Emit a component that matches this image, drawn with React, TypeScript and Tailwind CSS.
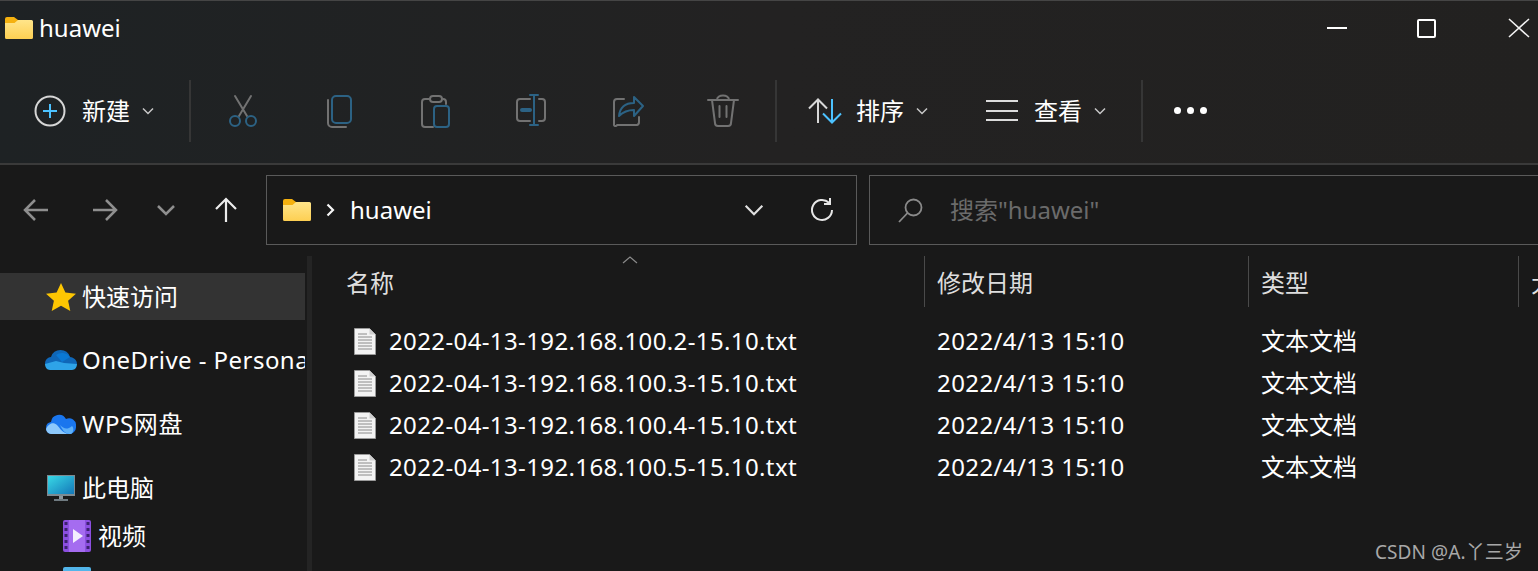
const FONT = "font-['Noto_Sans','Noto_Sans_CJK_SC',sans-serif]";

const FILES = [
  "2022-04-13-192.168.100.2-15.10.txt",
  "2022-04-13-192.168.100.3-15.10.txt",
  "2022-04-13-192.168.100.4-15.10.txt",
  "2022-04-13-192.168.100.5-15.10.txt",
];

// ── Icons ─────────────────────────────────────────────

function FolderIcon() {
  return (
    <svg width="28" height="22" viewBox="0 0 28 22" className="shrink-0">
      <defs>
        <linearGradient id="folderFront" x1="0" y1="0" x2="0" y2="1">
          <stop offset="0" stopColor="#ffe58a" />
          <stop offset="1" stopColor="#fdcf52" />
        </linearGradient>
      </defs>
      <path d="M0 2a2 2 0 0 1 2-2h7l4 3v4H0z" fill="#f5b10f" />
      <path d="M0 6h9.5L13 3h13.5A1.5 1.5 0 0 1 28 4.5V20.500A1.500 1.500 0 0 1 26.500 22H1.500A1.500 1.500 0 0 1 0 20.500z" fill="url(#folderFront)" />
    </svg>
  );
}

function Chevron({ size = 12, color = "#c8c8c8", width = 1.5 }: { size?: number; color?: string; width?: number }) {
  return (
    <svg width={size} height={size} viewBox="0 0 12 12" fill="none" className="shrink-0">
      <path d="M1 3.500 6 8.500l5-5" stroke={color} strokeWidth={width} />
    </svg>
  );
}

function ToolIcon({ children, dx = 0 }: { children: React.ReactNode; dx?: number }) {
  return (
    <div className="flex w-[96px] items-center justify-center">
      <svg width="32" height="34" viewBox={`${-dx} 0 32 34`} fill="none" strokeWidth="2" strokeLinecap="round" strokeLinejoin="round" className="overflow-visible">
        {children}
      </svg>
    </div>
  );
}

const GREY = "#727272";
const BLUE = "#2c6284";

function Separator() {
  return <div className="mx-[5px] h-[62px] w-[2px] shrink-0 bg-[#363636]" />;
}

function FileIcon() {
  return (
    <svg width="22" height="27" viewBox="0 0 22 27" className="shrink-0">
      <path d="M.5.500h15l6 6v20H.5z" fill="#f3f3f3" stroke="#9a9a9a" />
      <path d="M15.500.500v6h6z" fill="#cfcfcf" />
      <path d="M4 6h9M4 9h14M4 12h14M4 15h14M4 18h14M4 21h14" stroke="#8a8a8a" strokeWidth="1" />
    </svg>
  );
}

// ── Top sections ──────────────────────────────────────

function TitleBar() {
  return (
    <div className="flex h-[57px] items-center pb-[3px] pl-[5px]">
      <div className="flex items-center">
        <FolderIcon />
        <span className="ml-[6px] text-[24px] leading-none text-white">huawei</span>
      </div>
      <div className="ml-auto flex items-center pr-[8px]">
        <div className="h-[2px] w-[20px] bg-white" />
        <div className="ml-[70px] h-[19px] w-[19px] rounded-[2px] border-2 border-white" />
        <svg width="22" height="20" viewBox="0 0 22 20" fill="none" className="ml-[72px]">
          <path d="M1 1l20 18M21 1 1 19" stroke="#f2f2f2" strokeWidth="1.600" />
        </svg>
      </div>
    </div>
  );
}

function Toolbar() {
  return (
    <div className="flex h-[107px] items-center border-b-2 border-[#3a3a3a]">
      <div className="flex w-[189px] shrink-0 items-center pl-[34px]">
        <svg width="32" height="32" viewBox="0 0 32 32" fill="none" className="shrink-0">
          <circle cx="16" cy="16" r="14.500" stroke="#d6d6d6" strokeWidth="2" />
          <path d="M16 9v14M9 16h14" stroke="#4cc2ff" strokeWidth="2" />
        </svg>
        <span className="ml-[16px] text-[24px] leading-none text-white">新建</span>
        <span className="ml-[12px]"><Chevron /></span>
      </div>
      <div className="h-[62px] w-[2px] shrink-0 bg-[#363636]" />
      <div className="w-[3px]" />
      <ToolIcon dx={1}>
        <path d="M8 2l12 20M24 2 12 22" stroke={GREY} />
        <circle cx="8" cy="27" r="5" stroke={BLUE} />
        <circle cx="24" cy="27" r="5" stroke={BLUE} />
      </ToolIcon>
      <ToolIcon dx={2}>
        <rect x="8" y="2" width="19" height="27" rx="4" stroke={BLUE} />
        <path d="M4 6v23a4 4 0 0 0 4 4h14" stroke={GREY} />
      </ToolIcon>
      <ToolIcon dx={2}>
        <path d="M10 5H5a3 3 0 0 0-3 3v22a3 3 0 0 0 3 3h8M23 5a3 3 0 0 1 3 3v2" stroke={GREY} />
        <rect x="10" y="2" width="12" height="6" rx="3" stroke={GREY} />
        <rect x="14" y="12" width="15" height="21" rx="3" stroke={BLUE} />
      </ToolIcon>
      <ToolIcon dx={1}>
        <path d="M15 5H5a3 3 0 0 0-3 3v16a3 3 0 0 0 3 3h10M24 5h3a3 3 0 0 1 3 3v16a3 3 0 0 1-3 3h-3" stroke={GREY} />
        <path d="M15 1h8M19 1v30M15 31h8" stroke={BLUE} />
        <path d="M7 16h8" stroke={BLUE} strokeWidth="4" />
      </ToolIcon>
      <ToolIcon dx={2}>
        <path d="M12 5H5a3 3 0 0 0-3 3v22a1 1 0 0 0 3 1h20a3 3 0 0 0 2-3v-5" stroke={GREY} />
        <path d="M7 22c1-9 7-13 15-13V3l9 9-9 10v-6c-6 0-11 2-15 6z" stroke={BLUE} />
      </ToolIcon>
      <ToolIcon dx={1}>
        <path d="M1 6h30M10 6c0-6 12-6 12 0M5 6l3 23a3 3 0 0 0 3 3h10a3 3 0 0 0 3-3l3-23M12.500 12v11M19.500 12v11" stroke={GREY} />
      </ToolIcon>
      <Separator />
      <div className="flex w-[359px] shrink-0 items-center">
        <svg width="34" height="26" viewBox="0 0 34 26" fill="none" className="ml-[26px] shrink-0">
          <path d="M10 25V1.500M1 10.500l9-9 9 9" stroke="#d8d8d8" strokeWidth="2" />
          <path d="M24 1v23.500M15 15.500l9 9 9-9" stroke="#4cc2ff" strokeWidth="2" />
        </svg>
        <span className="ml-[14px] text-[24px] leading-none text-white">排序</span>
        <span className="ml-[12px]"><Chevron /></span>
        <div className="ml-[58px] flex h-[21px] w-[32px] shrink-0 flex-col justify-between">
          <div className="h-[2px] bg-[#dcdcdc]" />
          <div className="h-[2px] bg-[#dcdcdc]" />
          <div className="h-[2px] bg-[#dcdcdc]" />
        </div>
        <span className="ml-[16px] text-[24px] leading-none text-white">查看</span>
        <span className="ml-[12px]"><Chevron /></span>
      </div>
      <div className="h-[62px] w-[2px] shrink-0 bg-[#363636]" />
      <div className="ml-[31px] flex gap-[6px]">
        <div className="size-[7px] rounded-full bg-white" />
        <div className="size-[7px] rounded-full bg-white" />
        <div className="size-[7px] rounded-full bg-white" />
      </div>
    </div>
  );
}

function AddressRow() {
  return (
    <div className="flex h-[91px] items-start pt-[10px]">
      <div className="flex h-[70px] w-[266px] shrink-0 items-center">
        <svg width="26" height="24" viewBox="0 0 26 24" fill="none" className="ml-[23px] shrink-0">
          <path d="M25 12H2M12 2 2 12l10 10" stroke="#8f8f8f" strokeWidth="2.500" />
        </svg>
        <svg width="26" height="24" viewBox="0 0 26 24" fill="none" className="ml-[43px] shrink-0">
          <path d="M1 12h23M14 2l10 10-10 10" stroke="#8f8f8f" strokeWidth="2.500" />
        </svg>
        <svg width="18" height="12" viewBox="0 0 18 12" fill="none" className="ml-[39px] shrink-0">
          <path d="M1 2l8 8 8-8" stroke="#8f8f8f" strokeWidth="2.500" />
        </svg>
        <svg width="24" height="26" viewBox="0 0 24 26" fill="none" className="ml-[39px] shrink-0">
          <path d="M12 25V2M2 12 12 2l10 10" stroke="#ececec" strokeWidth="2.200" />
        </svg>
      </div>
      <div className="flex h-[70px] w-[591px] shrink-0 items-center border border-[#5a5a5a] pl-[16px]">
        <FolderIcon />
        <svg width="9" height="14" viewBox="0 0 9 14" fill="none" className="ml-[15px] shrink-0">
          <path d="M1.500 1.500 7 7l-5.500 5.500" stroke="#f5f5f5" strokeWidth="2.200" />
        </svg>
        <span className="ml-[15px] text-[24px] leading-none text-white">huawei</span>
        <span className="ml-auto"><Chevron size={20} color="#e0e0e0" width={1.300} /></span>
        <svg width="26" height="26" viewBox="0 0 26 26" fill="none" className="ml-[45px] mr-[21px] shrink-0">
          <path d="M23 13a10 10 0 1 1-3-7.200" stroke="#e6e6e6" strokeWidth="2" />
          <path d="M21 1v6h-6" stroke="#e6e6e6" strokeWidth="2" />
        </svg>
      </div>
      <div className="ml-[12px] flex h-[70px] flex-1 items-center border border-r-0 border-[#5a5a5a] pl-[28px]">
        <svg width="25" height="25" viewBox="0 0 25 25" fill="none" className="shrink-0">
          <circle cx="15.500" cy="9.500" r="8" stroke="#8a8a8a" strokeWidth="1.800" />
          <path d="M9.500 15 1 24" stroke="#8a8a8a" strokeWidth="1.800" />
        </svg>
        <span className="ml-[27px] text-[24px] leading-none text-[#6b6b6b]">搜索"huawei"</span>
      </div>
    </div>
  );
}

// ── Sidebar ───────────────────────────────────────────

function NavRow({ icon, label, active, nested, className, textClass = "" }: { icon: React.ReactNode; label: string; active?: boolean; nested?: boolean; className: string; textClass?: string }) {
  return (
    <div className={`flex h-[47px] items-center overflow-hidden whitespace-nowrap ${nested ? "pl-[61px]" : "pl-[45px]"} ${active ? "bg-[#333333]" : ""} ${className}`}>
      <div className="flex w-[32px] shrink-0 items-center justify-center">{icon}</div>
      <span className={`ml-[5px] text-[24px] leading-none text-white ${textClass}`}>{label}</span>
    </div>
  );
}

function Sidebar() {
  return (
    <div className="w-[305px] shrink-0 overflow-hidden pt-[17px]">
      <NavRow
        active
        label="快速访问"
        className=""
        icon={
          <svg width="30" height="28" viewBox="0 0 30 28">
            <path d="M15 0l4.400 9.500 10.600 1.200-7.900 7.100 2.200 10.200L15 22.800 5.700 28l2.200-10.200L0 10.700l10.600-1.200z" fill="#fdc602" />
          </svg>
        }
      />
      <NavRow
        label="OneDrive - Personal"
        className="mt-[16px]"
        textClass="tracking-[0.45px]"
        icon={
          <svg width="32" height="21" viewBox="0 0 32 21">
            <path d="M6 8a10 10 0 0 1 19 0c4 .5 7 3 7 7H0c0-4 2-6.500 6-7z" fill="#0f67b8" />
            <path d="M11 6a10 10 0 0 1 14 2l-8 5z" fill="#0a78d4" />
            <path d="M0 15l11-3 8 2 13 1c0 3-2 6-5 6H5c-3 0-5-3-5-6z" fill="#2ea3e8" />
          </svg>
        }
      />
      <NavRow
        label="WPS网盘"
        className="mt-[17px]"
        textClass="tracking-[0.6px]"
        icon={
          <svg width="30" height="21" viewBox="0 0 30 21">
            <path d="M5 9a8 8 0 0 1 15-3 7 7 0 0 1 10 7 8 8 0 0 1-5 8H5a6 6 0 0 1-5-6 6 6 0 0 1 5-6z" fill="#1a76ee" />
            <path d="M0 16c2-5 7-8 11-4 3 3 5 8 12 9H5a6 6 0 0 1-5-5z" fill="#8cc8fb" />
            <path d="M14 12c4 4 7 5 12 1 2 2 2 6-1 8h-2c-5-1-7-5-9-9z" fill="#5eb0f8" />
          </svg>
        }
      />
      <NavRow
        label="此电脑"
        className="mt-[17px]"
        icon={
          <svg width="28" height="26" viewBox="0 0 28 26">
            <defs>
              <linearGradient id="screen" x1="0" y1="0" x2="1" y2="1">
                <stop offset="0" stopColor="#38d9e6" />
                <stop offset="1" stopColor="#1477b8" />
              </linearGradient>
            </defs>
            <rect x="0" y="0" width="28" height="21" fill="#7d8a91" />
            <rect x="1" y="1" width="26" height="18" fill="url(#screen)" />
            <rect x="12" y="21" width="4" height="3" fill="#8b979d" />
            <rect x="7" y="24" width="14" height="2" fill="#6f7a80" />
          </svg>
        }
      />
      <NavRow
        nested
        label="视频"
        className="mt-px"
        icon={
          <svg width="28" height="32" viewBox="0 0 28 32">
            <rect width="28" height="32" rx="2" fill="#8c4fe0" />
            <rect x="6" y="0" width="16" height="32" fill="#a56cf0" />
            <path d="M10 9l10 7-10 7z" fill="#f4eefe" />
            <path d="M1.500 2h3v3h-3zM1.500 8h3v3h-3zM1.500 14h3v3h-3zM1.500 20h3v3h-3zM1.500 26h3v3h-3zM23.500 2h3v3h-3zM23.500 8h3v3h-3zM23.500 14h3v3h-3zM23.500 20h3v3h-3zM23.500 26h3v3h-3z" fill="#3d2170" />
          </svg>
        }
      />
      <div className="ml-[63px] mt-[8px] h-[8px] w-[28px] rounded-t-[2px] bg-[#52b5ea]" />
    </div>
  );
}

// ── File list ─────────────────────────────────────────

function HeaderCell({ label, className }: { label: string; className: string }) {
  return (
    <div className={`flex h-[51px] shrink-0 items-center overflow-hidden whitespace-nowrap border-r border-[#4a4a4a] ${className}`}>
      <span className="mt-[2px] text-[24px] leading-none text-[#dedede]">{label}</span>
    </div>
  );
}

function FileList() {
  return (
    <div className="relative min-w-0 flex-1 overflow-hidden">
      <svg width="16" height="8" viewBox="0 0 16 8" fill="none" className="absolute left-[310px] top-0">
        <path d="M1 7l7-6 7 6" stroke="#8a8a8a" strokeWidth="1.200" />
      </svg>
      <div className="flex">
        <HeaderCell label="名称" className="w-[613px] pl-[34px]" />
        <HeaderCell label="修改日期" className="w-[324px] pl-[12px]" />
        <HeaderCell label="类型" className="w-[270px] pl-[12px]" />
        <div className="flex h-[51px] items-center whitespace-nowrap pl-[12px] pt-[2px] text-[24px] leading-none text-[#dedede]">大小</div>
      </div>
      <div className="pt-[13px]">
        {FILES.map((name) => (
          <div key={name} className="flex h-[42px] items-center whitespace-nowrap text-[24px] leading-none text-white">
            <div className="flex w-[614px] shrink-0 items-center pl-[42px]">
              <FileIcon />
              <span className="ml-[13px] tracking-[0.38px]">{name}</span>
            </div>
            <span className="w-[324px] shrink-0 pl-[11px] tracking-[0.4px]">2022/4/13 15:10</span>
            <span className="pl-[11px]">文本文档</span>
          </div>
        ))}
      </div>
    </div>
  );
}

export default function App() {
  return (
    <div className={`relative h-[571px] w-[1538px] overflow-hidden bg-[#191919] ${FONT}`}>
      <div className="border-t border-[#454545] bg-gradient-to-r from-[#1e2224] via-[#232222] to-[#222120]">
        <TitleBar />
        <Toolbar />
      </div>
      <AddressRow />
      <div className="flex h-[315px]">
        <Sidebar />
        <div className="ml-[2px] w-[5px] shrink-0 bg-[#242424]" />
        <FileList />
      </div>
      <div className="absolute bottom-[9px] right-[15px] text-[19px] leading-none tracking-[0.1px] text-[#a8a8a8]">CSDN @A.丫三岁</div>
    </div>
  );
}
